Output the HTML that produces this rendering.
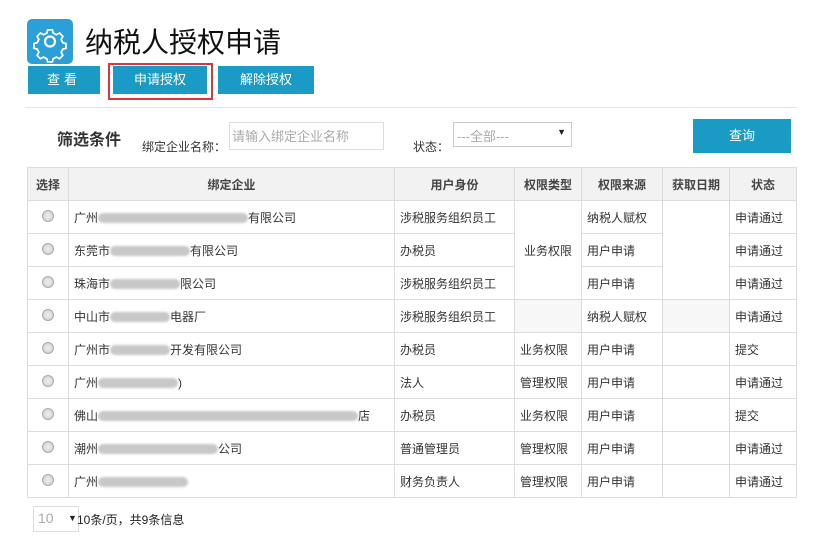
<!DOCTYPE html>
<html><head><meta charset="utf-8"><style>
*{margin:0;padding:0;box-sizing:border-box}
body{width:814px;height:554px;background:#fff;font-family:"Liberation Sans","Noto Sans CJK SC",sans-serif;color:#333;position:relative;overflow:hidden;font-size:12px}
.abs{position:absolute}
.btn{position:absolute;background:#1a9bc6;color:#fff;font-size:13px;text-align:center}
table{position:absolute;left:27px;top:167px;border-collapse:collapse;width:770px}
td,th{border:1px solid #dcdcdc;height:33px;font-size:12px;padding:0 5px;text-align:left;font-weight:normal}
th{background:#f2f2f2;text-align:center;font-weight:bold;color:#444}
.r{text-align:center}
.radio{display:inline-block;width:12px;height:12px;border-radius:50%;border:1px solid #aaa;background:radial-gradient(#eee,#ccc)}
.blur{display:inline-block;height:10px;background:#c8c8c8;border-radius:5px;vertical-align:middle;filter:blur(1px)}
.g{background:#f7f7f7}
</style></head><body>
<div class="abs" style="left:27px;top:19px;width:46px;height:45px;background:#2a9fd8;border-radius:5px">
<svg width="46" height="45" viewBox="0 0 46 45"><g fill="none" stroke="#fff" stroke-width="2.2"><circle cx="23" cy="22.5" r="5"/><path d="M20 8h6l1 4 4 2 4-2 4 4-2 4 2 4 4 1v6l-4 1-2 4 2 4-4 4-4-2-4 2-1 4h-6l-1-4-4-2-4 2-4-4 2-4-2-4-4-1v-6l4-1 2-4-2-4 4-4 4 2 4-2z" transform="translate(4.6 4.5) scale(0.8)"/></g></svg>
</div>
<div class="abs" style="left:85px;top:25px;font-size:28px;color:#111;line-height:36px">纳税人授权申请</div>
<div class="btn" style="left:28px;top:66px;width:72px;height:28px;line-height:28px;letter-spacing:4px">查看</div>
<div class="abs" style="left:108px;top:63px;width:105px;height:37px;border:2px solid #d9363e"></div>
<div class="btn" style="left:113px;top:66px;width:94px;height:28px;line-height:28px">申请授权</div>
<div class="btn" style="left:218px;top:66px;width:96px;height:28px;line-height:28px">解除授权</div>
<div class="abs" style="left:25px;top:107px;width:772px;height:1px;background:#e5e5e5"></div>
<div class="abs" style="left:57px;top:126px;font-size:16px;font-weight:bold;color:#333">筛选条件</div>
<div class="abs" style="left:142px;top:138px;font-size:12px">绑定企业名称：</div>
<div class="abs" style="left:229px;top:122px;width:155px;height:28px;border:1px solid #ddd;color:#aaa;font-size:13px;padding:3px 2px">请输入绑定企业名称</div>
<div class="abs" style="left:413px;top:138px">状态：</div>
<div class="abs" style="left:453px;top:122px;width:119px;height:25px;border:1px solid #ccc;color:#aaa;font-size:13px;padding:3px 3px">---全部---<span style="position:absolute;right:5px;top:4px;color:#222;font-size:9px">▼</span></div>
<div class="btn" style="left:693px;top:119px;width:98px;height:34px;line-height:34px">查询</div>
<table>
<tr><th style="width:41px">选择</th><th style="width:326px">绑定企业</th><th style="width:120px">用户身份</th><th style="width:67px">权限类型</th><th style="width:81px">权限来源</th><th style="width:67px">获取日期</th><th>状态</th></tr>
<tr><td class="r"><span class="radio"></span></td><td>广州<span class="blur" style="width:150px"></span>有限公司</td><td>涉税服务组织员工</td><td rowspan="3" class="r">业务权限</td><td>纳税人赋权</td><td rowspan="3"></td><td>申请通过</td></tr>
<tr><td class="r"><span class="radio"></span></td><td>东莞市<span class="blur" style="width:80px"></span>有限公司</td><td>办税员</td><td>用户申请</td><td>申请通过</td></tr>
<tr><td class="r"><span class="radio"></span></td><td>珠海市<span class="blur" style="width:70px"></span>限公司</td><td>涉税服务组织员工</td><td>用户申请</td><td>申请通过</td></tr>
<tr><td class="r"><span class="radio"></span></td><td>中山市<span class="blur" style="width:60px"></span>电器厂</td><td>涉税服务组织员工</td><td class="g"></td><td>纳税人赋权</td><td class="g"></td><td>申请通过</td></tr>
<tr><td class="r"><span class="radio"></span></td><td>广州市<span class="blur" style="width:60px"></span>开发有限公司</td><td>办税员</td><td>业务权限</td><td>用户申请</td><td></td><td>提交</td></tr>
<tr><td class="r"><span class="radio"></span></td><td>广州<span class="blur" style="width:80px"></span>)</td><td>法人</td><td>管理权限</td><td>用户申请</td><td></td><td>申请通过</td></tr>
<tr><td class="r"><span class="radio"></span></td><td>佛山<span class="blur" style="width:260px"></span>店</td><td>办税员</td><td>业务权限</td><td>用户申请</td><td></td><td>提交</td></tr>
<tr><td class="r"><span class="radio"></span></td><td>潮州<span class="blur" style="width:120px"></span>公司</td><td>普通管理员</td><td>管理权限</td><td>用户申请</td><td></td><td>申请通过</td></tr>
<tr><td class="r"><span class="radio"></span></td><td>广州<span class="blur" style="width:90px"></span></td><td>财务负责人</td><td>管理权限</td><td>用户申请</td><td></td><td>申请通过</td></tr>
</table>
<div class="abs" style="left:33px;top:506px;width:46px;height:26px;border:1px solid #ddd;color:#aaa;font-size:14px;padding:3px 4px">10</div>
<div class="abs" style="left:68px;top:513px;font-size:9px;color:#222">▼</div>
<div class="abs" style="left:77px;top:511px;font-size:12px;color:#222">10条/页，共9条信息</div>
</body></html>
